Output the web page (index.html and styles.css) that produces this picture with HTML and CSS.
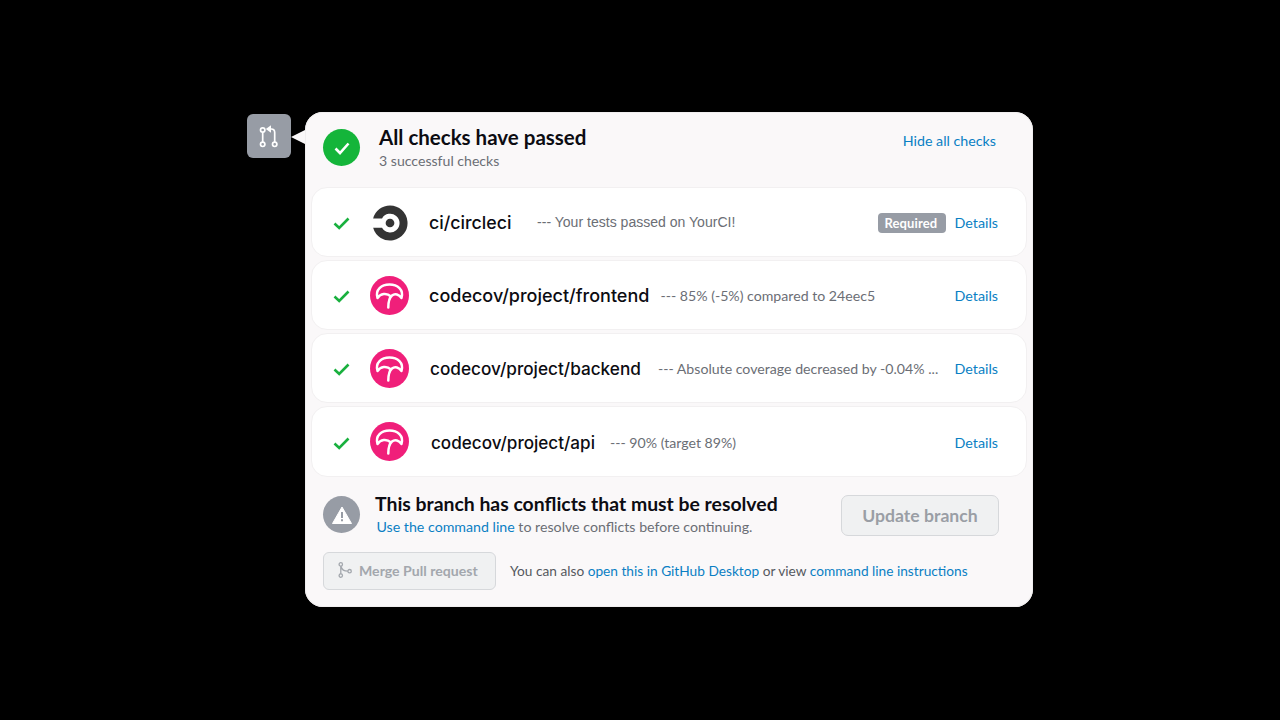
FILE: index.html
```html
<!DOCTYPE html>
<html lang="en">
<head>
<meta charset="utf-8">
<title>All checks have passed</title>
<link rel="stylesheet" href="styles.css">
</head>
<body>
<main class="stage">
  <div class="pr-badge">
    <svg width="24" height="26" viewBox="0 0 24 26" fill="none" stroke="#fff" stroke-width="1.7">
      <circle cx="5.7" cy="7" r="2.2"/><circle cx="5.7" cy="21.3" r="2.2"/><circle cx="17.7" cy="21.3" r="2.2"/>
      <path d="M5.7 9.2v9.9M17.7 19.1V9.5C17.7 7.2 16.5 6 14.2 6H12"/>
      <path d="M14 2.2L8.8 6L14 9.8Z" fill="#fff" stroke="none"/>
    </svg>
  </div>
  <section class="panel">
    <span class="pointer"></span>
    <header class="summary">
      <span class="status-ok">
        <svg width="16" height="14" viewBox="0 0 16 14" fill="none" stroke="#fff" stroke-width="2.6"><path d="M1.5 7.5L6 12L14.5 2.5"/></svg>
      </span>
      <div class="summary-text">
        <h1>All checks have passed</h1>
        <p>3 successful checks</p>
      </div>
      <a class="link hide-all">Hide all checks</a>
    </header>

    <div class="checks">
      <article class="check">
        <svg class="tick" width="17" height="13" viewBox="0 0 17 13" fill="none" stroke="#19b03e" stroke-width="2.6"><path d="M1.5 6.5L6.2 11L15.5 1.5"/></svg>
        <svg class="logo logo-ci" width="36" height="36" viewBox="0 0 38 38">
          <path fill="#343434" d="M19 .5A18.5 18.5 0 1 1 1.2 24H10.6A9.9 9.9 0 1 0 10.6 14.2H1.2A18.5 18.5 0 0 1 19 .5Z"/>
          <circle cx="19" cy="19" r="4.6" fill="#343434"/>
        </svg>
        <span class="name name-ci">ci/circleci</span>
        <span class="desc desc-arial">--- Your tests passed on YourCI!</span>
        <span class="required">Required</span>
        <a class="link details">Details</a>
      </article>

      <article class="check">
        <svg class="tick" width="17" height="13" viewBox="0 0 17 13" fill="none" stroke="#19b03e" stroke-width="2.6"><path d="M1.5 6.5L6.2 11L15.5 1.5"/></svg>
        <svg class="logo" width="39" height="39" viewBox="0 0 39 39">
          <circle cx="19.5" cy="19.5" r="19.5" fill="#f01f7a"/>
          <path d="M7.5 22C5 13.5 11.5 8.5 19.5 8.5S34 13.5 31.5 22C29 18.5 25 17 22 19.5C19 22 18.3 27 18.3 31.5M7.5 22C10.5 17.5 16.5 16.5 21 20.5" fill="none" stroke="#fff" stroke-width="2.5" stroke-linecap="round" stroke-linejoin="round"/>
        </svg>
        <span class="name name-frontend">codecov/project/frontend</span>
        <span class="desc desc-frontend">--- 85% (-5%) compared to 24eec5</span>
        <a class="link details">Details</a>
      </article>

      <article class="check">
        <svg class="tick" width="17" height="13" viewBox="0 0 17 13" fill="none" stroke="#19b03e" stroke-width="2.6"><path d="M1.5 6.5L6.2 11L15.5 1.5"/></svg>
        <svg class="logo" width="39" height="39" viewBox="0 0 39 39">
          <circle cx="19.5" cy="19.5" r="19.5" fill="#f01f7a"/>
          <path d="M7.5 22C5 13.5 11.5 8.5 19.5 8.5S34 13.5 31.5 22C29 18.5 25 17 22 19.5C19 22 18.3 27 18.3 31.5M7.5 22C10.5 17.5 16.5 16.5 21 20.5" fill="none" stroke="#fff" stroke-width="2.5" stroke-linecap="round" stroke-linejoin="round"/>
        </svg>
        <span class="name name-backend">codecov/project/backend</span>
        <span class="desc desc-backend">--- Absolute coverage decreased by -0.04% ...</span>
        <a class="link details">Details</a>
      </article>

      <article class="check check-last">
        <svg class="tick" width="17" height="13" viewBox="0 0 17 13" fill="none" stroke="#19b03e" stroke-width="2.6"><path d="M1.5 6.5L6.2 11L15.5 1.5"/></svg>
        <svg class="logo" width="39" height="39" viewBox="0 0 39 39">
          <circle cx="19.5" cy="19.5" r="19.5" fill="#f01f7a"/>
          <path d="M7.5 22C5 13.5 11.5 8.5 19.5 8.5S34 13.5 31.5 22C29 18.5 25 17 22 19.5C19 22 18.3 27 18.3 31.5M7.5 22C10.5 17.5 16.5 16.5 21 20.5" fill="none" stroke="#fff" stroke-width="2.5" stroke-linecap="round" stroke-linejoin="round"/>
        </svg>
        <span class="name name-api">codecov/project/api</span>
        <span class="desc desc-api">--- 90% (target 89%)</span>
        <a class="link details">Details</a>
      </article>
    </div>

    <div class="conflict">
      <span class="status-warn">
        <svg width="20" height="18" viewBox="0 0 20 18">
          <path d="M10 1L19.5 17.5H.5Z" fill="#fff" stroke="#fff" stroke-linejoin="round"/>
          <path d="M10 6v6M10 13.2v2" stroke="#979ca5" stroke-width="2"/>
        </svg>
      </span>
      <div class="conflict-text">
        <h2>This branch has conflicts that must be resolved</h2>
        <p><a class="link">Use the command line</a> to resolve conflicts before continuing.</p>
      </div>
      <button class="update" type="button">Update branch</button>
    </div>

    <div class="merge-row">
      <button class="merge" type="button">
        <svg width="14" height="16" viewBox="0 0 14 16" fill="none" stroke="#a3a7ad" stroke-width="1.3">
          <circle cx="2.8" cy="2.4" r="1.7"/><circle cx="2.8" cy="13.6" r="1.7"/><circle cx="11.6" cy="9.2" r="1.7"/>
          <path d="M2.8 4v8M3 4.5C3.8 7.8 6.5 9.2 9.9 9.2"/>
        </svg>
        Merge Pull request
      </button>
      <p class="merge-note">You can also <a class="link">open this in GitHub Desktop</a> or view <a class="link">command line instructions</a></p>
    </div>
  </section>
</main>
</body>
</html>
```
FILE: styles.css
```css
* { box-sizing: border-box; }
html, body { margin: 0; height: 100%; background: #000; }
body { font-family: Lato, "Liberation Sans", sans-serif; overflow: hidden; }
h1, h2, p { margin: 0; }

.stage {
  display: flex;
  align-items: flex-start;
  gap: 14px;
  padding: 112px 0 0 247px;
}
.pr-badge {
  width: 44px;
  height: 44px;
  margin-top: 2px;
  border-radius: 6px;
  background: #979ca5;
  display: flex;
  align-items: center;
  justify-content: center;
}

.panel {
  position: relative;
  width: 728px;
  height: 495px;
  padding: 0 6px;
  border-radius: 18px;
  background: #faf8f9;
  box-shadow: inset 0 0 0 1px #f0eeef;
}
.pointer {
  position: absolute;
  left: -14px;
  top: 18px;
  width: 0;
  height: 0;
  border-style: solid;
  border-width: 7px 14px 7px 0;
  border-color: transparent #faf8f9 transparent transparent;
}

.link { color: #0a7fc4; }

.summary {
  height: 75px;
  display: flex;
  align-items: flex-start;
  padding: 16px 31px 0 12px;
}
.status-ok {
  width: 37px;
  height: 37px;
  border-radius: 50%;
  margin-top: 1px;
  background: #14b53a;
  display: flex;
  align-items: center;
  justify-content: center;
}
.summary-text { margin-left: 19px; flex: 1; }
.summary-text h1 { font-size: 20.5px; line-height: 18px; font-weight: 700; color: #0c0c12; }
.summary-text p { margin-top: 7px; font-size: 14.1px; line-height: 16px; color: #6b6e75; }
.hide-all { font-size: 14.25px; line-height: 26px; }

.checks { display: flex; flex-direction: column; gap: 3px; }
.check {
  height: 70px;
  display: flex;
  align-items: center;
  padding-left: 21px;
  padding-right: 28px;
  background: #fff;
  border: 1px solid #f2f0f1;
  border-radius: 16px;
}
.check-last { height: 71px; }
.tick { flex: none; margin-top: 3px; }
.logo { flex: none; margin-left: 20px; }
.logo-ci { margin-left: 22px; margin-top: 2px; }
.name {
  margin-left: 20px;
  margin-top: 1px;
  font-family: Inter, sans-serif;
  font-weight: 500;
  color: #0c0c12;
  white-space: nowrap;
}
.name-ci { margin-left: 21px; font-size: 17.8px; }
.name-frontend { font-size: 18px; }
.name-backend { margin-left: 21px; font-size: 17.2px; }
.name-api { margin-left: 22px; font-size: 17.1px; }
.desc { white-space: nowrap; color: #6b6e75; font-size: 14.15px; }
.check-last .desc { margin-top: 2px; }
.desc-arial { margin-left: 25.5px; font-family: "Liberation Sans", sans-serif; font-size: 14.05px; }
.desc-frontend { margin-left: 11px; }
.desc-backend { margin-left: 17px; }
.desc-api { margin-left: 15px; }
.required {
  margin-left: auto;
  margin-top: 2px;
  height: 20px;
  padding: 0 7px;
  width: 68px;
  border-radius: 4px;
  background: #979ca5;
  color: #fff;
  font-size: 13px;
  font-weight: 700;
  line-height: 20px;
  letter-spacing: .1px;
}
.details { margin-left: auto; margin-top: 1px; font-size: 14.3px; }
.check-last .details { margin-top: 2px; }
.required + .details { margin-left: 9px; }

.conflict {
  display: flex;
  align-items: flex-start;
  height: 75px;
  padding: 17px 28px 0 12px;
}
.status-warn {
  width: 37px;
  height: 37px;
  margin-top: 2px;
  border-radius: 50%;
  background: #979ca5;
  display: flex;
  align-items: center;
  justify-content: center;
}
.conflict-text { margin-left: 15px; flex: 1; }
.conflict-text h2 { font-size: 19.4px; line-height: 20px; font-weight: 700; color: #0c0c12; }
.conflict-text p { margin-top: 4px; margin-left: 1.5px; font-size: 14.2px; line-height: 18px; color: #6b6e75; }
.update {
  width: 158px;
  height: 41px;
  margin-top: 1px;
  border: 1px solid #d6d8db;
  border-radius: 7px;
  background: #f0f1f2;
  color: #9a9ea5;
  font: 700 17.6px Lato, sans-serif;
}

.merge-row {
  display: flex;
  align-items: center;
  padding-left: 12px;
}
.merge {
  width: 173px;
  height: 38px;
  display: flex;
  align-items: center;
  gap: 7px;
  padding: 0 0 2px 14px;
  border: 1px solid #d6d8db;
  border-radius: 6px;
  background: #f0f1f2;
  color: #a3a7ad;
  font: 700 14.1px Lato, sans-serif;
  white-space: nowrap;
}
.merge-note { margin-left: 14px; padding-bottom: 2px; font-size: 13.7px; color: #55585e; white-space: nowrap; }
```
